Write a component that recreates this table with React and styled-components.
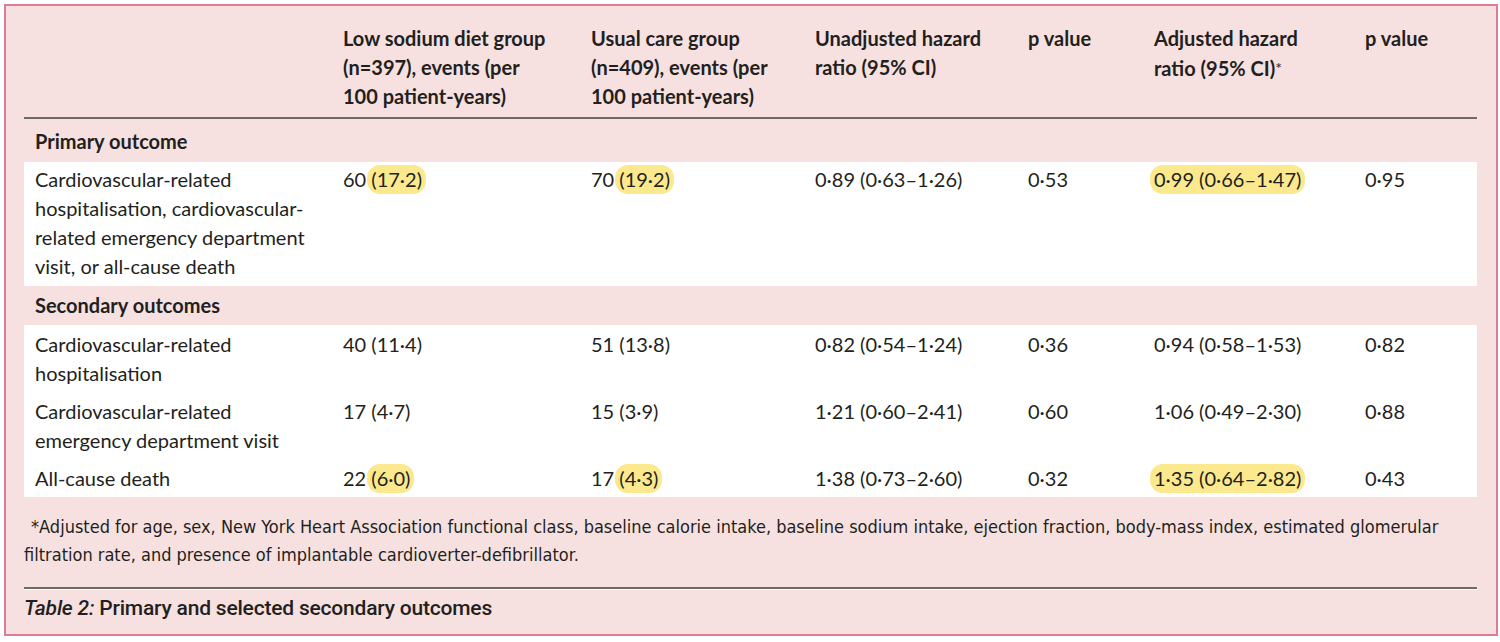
import React from 'react'
import styled, { createGlobalStyle } from 'styled-components'

const GlobalStyle = createGlobalStyle`
    html, body {
        margin : 0;
        padding : 0;
        background : #ffffff;
    }
    body {
        font-family : Lato, "Open Sans", sans-serif;
        color : #231f20;
    }
`

const Frame = styled.div`
    margin : 4px;
    width : 1494px;
    height : 632px;
    box-sizing : border-box;
    border : 2px solid #dc7d98;
    background : #f6e1e0;
    padding : 0 19px 0 18px;
    display : flex;
    flex-direction : column;
`

const Grid = styled.div`
    display : grid;
    grid-template-columns : 308px 248px 224px 213px 126px 211px 123px;
    font-size : 20px;
    line-height : 29px;
`

const HeadCell = styled.div`
    padding : 18px 0 6px 11px;
    font-weight : 700;
    border-bottom : 2px solid #6d6a6a;
`

const Star = styled.span`
    font-weight : 400;
    font-size : 16px;
    vertical-align : 2px;
`

const SectionTitle = styled.div`
    grid-column : 1 / -1;
    padding : ${p => p.$first ? '8px 0 6px 11px' : '5px 0 5px 11px'};
    font-weight : 700;
`

const Cell = styled.div`
    background : #ffffff;
    padding : ${p => p.$pad || '4px 0 4px 11px'};
`

const Mark = styled.span`
    display : inline-block;
    line-height : 29px;
    background : #fce98e;
    border-radius : 13px;
    padding : 0 4px;
    margin : 0 -4px;
`

const Footnote = styled.div`
    margin-top : 16px;
    font-family : "Liberation Sans Narrow", "DejaVu Sans Condensed", "Roboto Condensed", Roboto, sans-serif;
    font-stretch : condensed;
    font-size : 18px;
    line-height : 28px;
    color : #231f20;
    padding-right : 2px;
    .first {
        padding-left : 7px;
    }
`

const Caption = styled.div`
    margin-top : 18px;
    padding-top : 5px;
    border-top : 2px solid #6d6a6a;
    box-shadow : inset 0 1px 0 #ffffff;
    font-family : Roboto, "Liberation Sans", sans-serif;
    font-size : 21px;
    line-height : 28px;
    font-weight : 500;
    letter-spacing : -0.2px;
    i {
        font-weight : 500;
    }
`

const hl = (s) => <Mark>{s}</Mark>

const primary = [
    {
        label : <>Cardiovascular-related<br />hospitalisation, cardiovascular-<br />related emergency department<br />visit, or all-cause death</>,
        values : [<>60 {hl('(17·2)')}</>, <>70 {hl('(19·2)')}</>, '0·89 (0·63–1·26)', '0·53', hl('0·99 (0·66–1·47)'), '0·95'],
    },
]

const secondary = [
    {
        label : <>Cardiovascular-related<br />hospitalisation</>,
        values : ['40 (11·4)', '51 (13·8)', '0·82 (0·54–1·24)', '0·36', '0·94 (0·58–1·53)', '0·82'],
    },
    {
        label : <>Cardiovascular-related<br />emergency department visit</>,
        values : ['17 (4·7)', '15 (3·9)', '1·21 (0·60–2·41)', '0·60', '1·06 (0·49–2·30)', '0·88'],
    },
    {
        label : 'All-cause death',
        values : [<>22 {hl('(6·0)')}</>, <>17 {hl('(4·3)')}</>, '1·38 (0·73–2·60)', '0·32', hl('1·35 (0·64–2·82)'), '0·43'],
    },
]

const Rows = ({ rows, pad }) => rows.map((r, i) => (
    <React.Fragment key={i}>
        <Cell $pad={pad}>{r.label}</Cell>
        {r.values.map((v, j) => <Cell key={j} $pad={pad}>{v}</Cell>)}
    </React.Fragment>
))

const App = () => {
    return (
        <>
            <GlobalStyle />
            <Frame>
                <Grid>
                    <HeadCell />
                    <HeadCell>Low sodium diet group<br />(n=397), events (per<br />100 patient-years)</HeadCell>
                    <HeadCell>Usual care group<br />(n=409), events (per<br />100 patient-years)</HeadCell>
                    <HeadCell>Unadjusted hazard<br />ratio (95% CI)</HeadCell>
                    <HeadCell>p value</HeadCell>
                    <HeadCell>Adjusted hazard<br />ratio (95% CI)<Star>*</Star></HeadCell>
                    <HeadCell>p value</HeadCell>

                    <SectionTitle $first>Primary outcome</SectionTitle>
                    <Rows rows={primary} pad="3px 0 5px 11px" />

                    <SectionTitle>Secondary outcomes</SectionTitle>
                    <Rows rows={secondary} pad="5px 0 4px 11px" />
                </Grid>
                <Footnote>
                    <span className="first">*Adjusted for age, sex, New York Heart Association functional class, baseline calorie intake, baseline sodium intake, ejection fraction, body-mass index, estimated glomerular</span><br />
                    filtration rate, and presence of implantable cardioverter-defibrillator.
                </Footnote>
                <Caption><i>Table 2:</i> Primary and selected secondary outcomes</Caption>
            </Frame>
        </>
    )
}

export default App
